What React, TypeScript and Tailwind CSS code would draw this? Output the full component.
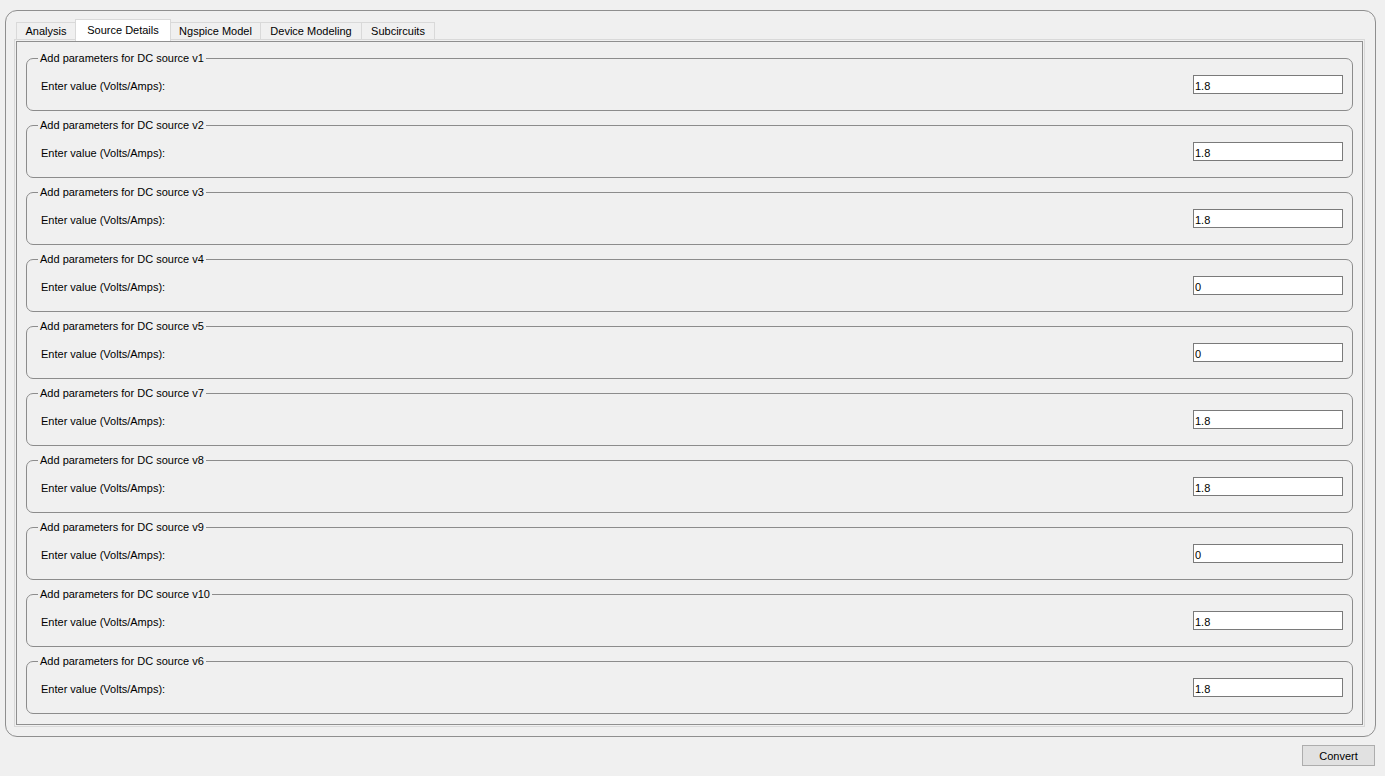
const sources = [
  { name: 'v1', value: '1.8' },
  { name: 'v2', value: '1.8' },
  { name: 'v3', value: '1.8' },
  { name: 'v4', value: '0' },
  { name: 'v5', value: '0' },
  { name: 'v7', value: '1.8' },
  { name: 'v8', value: '1.8' },
  { name: 'v9', value: '0' },
  { name: 'v10', value: '1.8' },
  { name: 'v6', value: '1.8' },
];

const tabs = [
  { label: 'Analysis', width: 'w-[60px]' },
  { label: 'Source Details', width: 'w-[96px]', active: true },
  { label: 'Ngspice Model', width: 'w-[91px]' },
  { label: 'Device Modeling', width: 'w-[102px]' },
  { label: 'Subcircuits', width: 'w-[74px]' },
];

function SourceGroup({ name, value }: { name: string; value: string }) {
  return (
    <fieldset className="border border-[#8c8c8c] rounded-[7px] pl-[11px] pr-[9px] pb-[16px]">
      <legend className="px-[2px] leading-[13px]">Add parameters for DC source {name}</legend>
      <div className="mt-[10px] pl-[3px] flex items-center justify-between h-[19px]">
        <span className="pt-[4px]">Enter value (Volts/Amps):</span>
        <input
          defaultValue={value}
          className="w-[150px] h-[19px] border border-[#7a7a7a] bg-white px-[1px] pt-[2px] text-[11px] outline-none font-['Liberation_Sans',Arial,sans-serif]"
        />
      </div>
    </fieldset>
  );
}

export default function App() {
  return (
    <div className="w-[1385px] h-[776px] bg-[#f0f0f0] text-[11px] text-black overflow-hidden font-['Liberation_Sans',Arial,sans-serif]">
      <div className="pt-[10px] pl-[5px] pr-[9px]">
        {/* outer frame */}
        <div className="h-[727px] rounded-[12px] border border-[#8f8f8f] pt-[8px] pl-[8px] pr-[10px] pb-[9px] flex flex-col">
          {/* tab bar */}
          <div className="flex items-end h-[20px] ml-[2px]">
            {tabs.map((t, i) =>
              t.active ? (
                <div
                  key={t.label}
                  className={`${t.width} ${i > 0 ? '-ml-px' : ''} relative z-10 h-[22px] -mb-[2px] bg-white border-t border-l border-r border-[#d9d9d9] flex items-start justify-center pt-[4px] leading-[13px]`}
                >
                  {t.label}
                </div>
              ) : (
                <div
                  key={t.label}
                  className={`${t.width} ${i > 0 ? '-ml-px' : ''} h-[17px] bg-[#f0f0f0] border-t border-l border-r border-[#d9d9d9] flex items-center justify-center leading-[13px]`}
                >
                  {t.label}
                </div>
              )
            )}
          </div>
          {/* pane */}
          <div className="flex-1 border border-[#d9d9d9] p-[1px] flex flex-col">
            <div className="flex-1 border border-[#8f8f8f] pt-[10px] pl-[9px] pr-[9px] flex flex-col gap-[8px]">
              {sources.map((s) => (
                <SourceGroup key={s.name} name={s.name} value={s.value} />
              ))}
            </div>
          </div>
        </div>
      </div>
      <div className="flex justify-end pr-[10px] mt-[8px]">
        <button className="w-[73px] h-[21px] bg-[#e1e1e1] border border-[#adadad] text-[11px] leading-[13px] pt-[2px]">
          Convert
        </button>
      </div>
    </div>
  );
}
